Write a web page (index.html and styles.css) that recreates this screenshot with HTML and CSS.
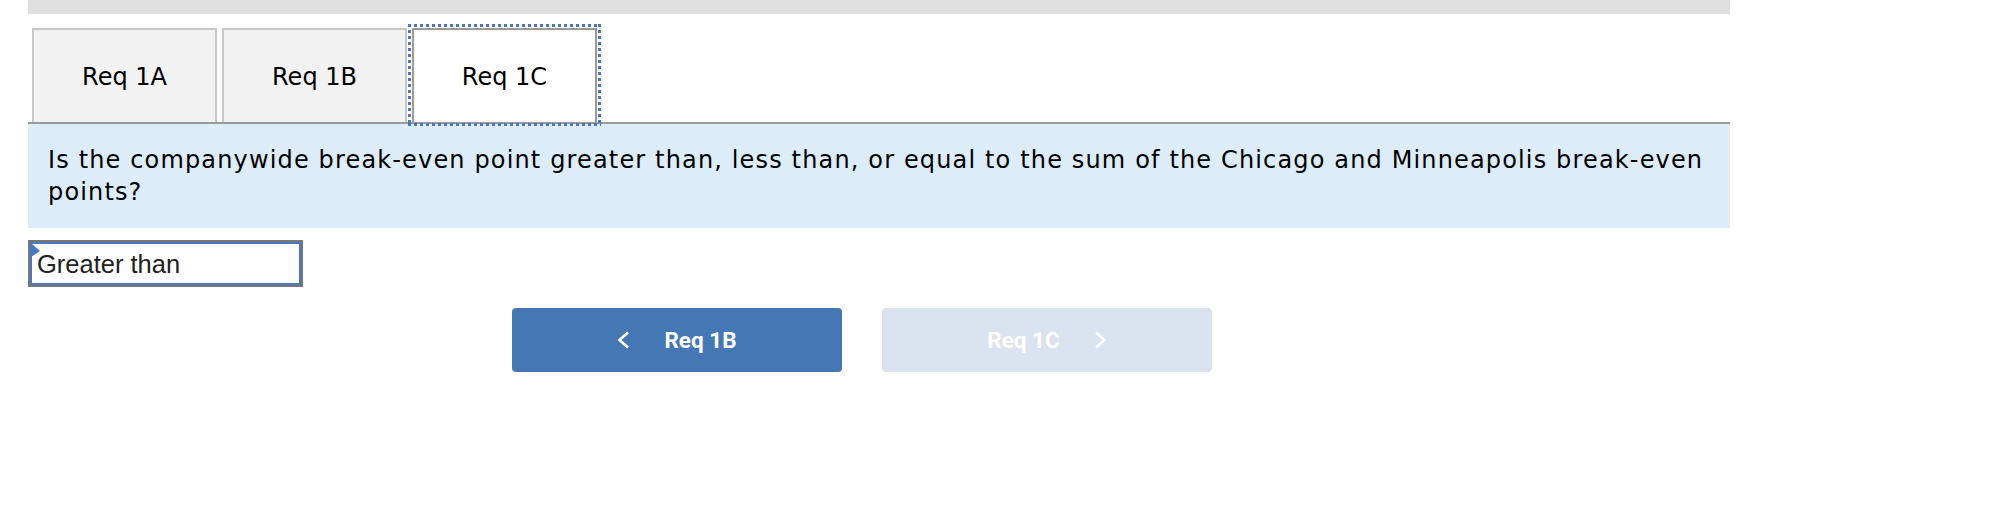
FILE: index.html
```html
<!DOCTYPE html>
<html lang="en">
  <head>
    <meta charset="UTF-8" />
    <meta name="viewport" content="width=device-width, initial-scale=1.0" />
    <title>Req 1C</title>
    <link rel="stylesheet" href="styles.css">
  </head>
  <body>
    <div class="page">
      <div class="top-bar"></div>
      <div class="tabs">
        <div class="tab">Req 1A</div>
        <div class="tab">Req 1B</div>
        <div class="tab active">Req 1C</div>
      </div>
      <div class="question">
        Is the companywide break-even point greater than, less than, or equal to the sum of the Chicago and Minneapolis break-even points?
      </div>
      <div class="answer">
        <svg class="flag" width="9" height="14" viewBox="0 0 9 14"><polygon points="0,0 9,8 0,14" fill="#4a78c0"/></svg>
        <span>Greater than</span>
      </div>
      <div class="nav">
        <button class="nav-btn prev">
          <svg width="13" height="18" viewBox="0 0 13 18"><polyline points="11,1.5 2.5,9 11,16.5" fill="none" stroke="#fff" stroke-width="2.6"/></svg>
          <span>Req 1B</span>
        </button>
        <button class="nav-btn next" disabled>
          <span>Req 1C</span>
          <svg width="13" height="18" viewBox="0 0 13 18"><polyline points="2,1.5 10.5,9 2,16.5" fill="none" stroke="#fff" stroke-width="2.6"/></svg>
        </button>
      </div>
    </div>
  </body>
</html>
```

FILE: styles.css
```css
body {
  margin: 0;
  background-color: white;
  font-family: "DejaVu Sans", Verdana, sans-serif;
  color: #000;
}
.page {
  margin-left: 28px;
  width: 1702px;
}
.top-bar {
  height: 14px;
  background-color: #e0e0e0;
}
.tabs {
  display: flex;
  gap: 5px;
  margin-top: 14px;
  padding-left: 4px;
  border-bottom: 2px solid #999;
}
.tab {
  box-sizing: border-box;
  width: 185px;
  height: 94px;
  display: flex;
  align-items: center;
  justify-content: center;
  padding-top: 2px;
  background-color: #f2f2f2;
  border: 2px solid #c8c8c8;
  border-bottom: none;
  font-size: 24px;
}
.tab.active {
  position: relative;
  background-color: white;
  border-color: #999;
}
/* focus ring drawn as square dots */
.tab.active::after {
  content: "";
  position: absolute;
  top: -6px;
  left: -6px;
  right: -6px;
  bottom: -4px;
  background:
    repeating-linear-gradient(90deg, #4a78c0 0 3px, transparent 3px 6px) top / 100% 3px no-repeat,
    repeating-linear-gradient(90deg, #4a78c0 0 3px, transparent 3px 6px) bottom / 100% 3px no-repeat,
    repeating-linear-gradient(180deg, #4a78c0 0 3px, transparent 3px 6px) left / 3px 100% no-repeat,
    repeating-linear-gradient(180deg, #4a78c0 0 3px, transparent 3px 6px) right / 3px 100% no-repeat;
  pointer-events: none;
}
.question {
  background-color: #ddecf9;
  padding: 20px 20px;
  font-size: 24px;
  line-height: 32px;
  letter-spacing: 1.15px;
}
.answer {
  position: relative;
  box-sizing: border-box;
  width: 275px;
  height: 47px;
  margin-top: 12px;
  border: 2px solid #767676;
  box-shadow: inset 0 0 0 2px #4a78c0;
  padding: 1px 0 0 7px;
  font-family: "Liberation Sans", Arial, sans-serif;
  font-size: 25.5px;
  line-height: 42px;
  color: #222;
}
.flag {
  position: absolute;
  left: 1px;
  top: 1px;
}
.nav {
  display: flex;
  gap: 40px;
  margin-top: 21px;
  padding-left: 484px;
}
.nav-btn {
  width: 330px;
  height: 64px;
  display: flex;
  align-items: center;
  justify-content: center;
  gap: 34px;
  border: none;
  border-radius: 4px;
  font-family: Roboto, "Liberation Sans", sans-serif;
  font-weight: 700;
  font-size: 22.5px;
  color: white;
  cursor: pointer;
}
.nav-btn.prev {
  background-color: #4677b5;
}
.nav-btn.next {
  background-color: #dae3ef;
  cursor: default;
}
```
